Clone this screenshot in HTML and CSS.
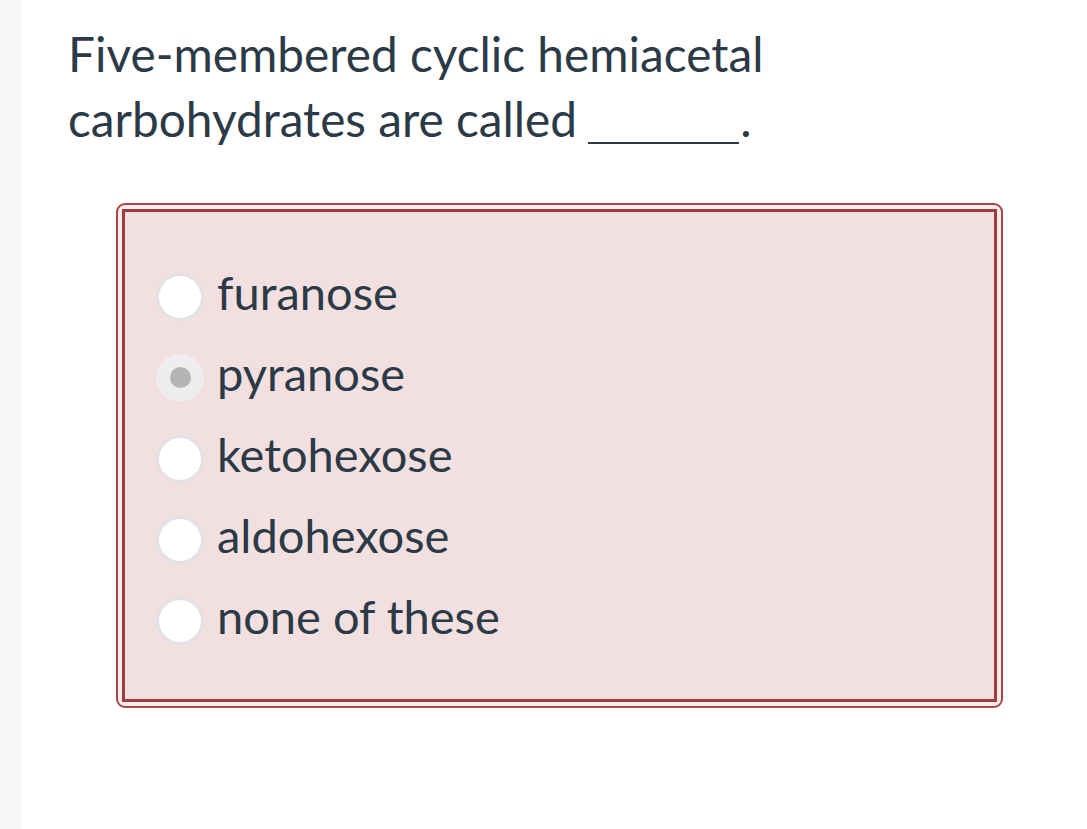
FILE: index.html
```html
<!DOCTYPE html>
<html>
<head>
<meta charset="utf-8">
<link rel="stylesheet" href="styles.css">
</head>
<body>
<div class="page">
  <div class="strip"></div>
  <div class="content">
    <p class="question">Five-membered cyclic hemiacetal carbohydrates are called <span class="blank"></span>.</p>
    <div class="answers-outer">
      <div class="answers">
        <div class="option"><span class="radio"></span><span class="label">furanose</span></div>
        <div class="option"><span class="radio selected"></span><span class="label">pyranose</span></div>
        <div class="option"><span class="radio"></span><span class="label">ketohexose</span></div>
        <div class="option"><span class="radio"></span><span class="label">aldohexose</span></div>
        <div class="option"><span class="radio"></span><span class="label">none of these</span></div>
      </div>
    </div>
  </div>
</div>
</body>
</html>
```

FILE: styles.css
```css
html, body {
  margin: 0;
  padding: 0;
  background: #ffffff;
}
body {
  font-family: Lato, "Noto Sans", sans-serif;
  color: #2b3a46;
}
.page {
  display: flex;
  width: 1087px;
  height: 829px;
  overflow: hidden;
}
.strip {
  width: 22px;
  flex: none;
  background: #f6f6f8;
}
.content {
  flex: 1;
  padding-left: 46px;
  padding-top: 21px;
}
.question {
  margin: 0;
  width: 740px;
  font-size: 47.8px;
  line-height: 65px;
}
.blank {
  display: inline-block;
  width: 151px;
  border-bottom: 2px solid #2b3a46;
  margin-left: -1px;
  margin-right: 1px;
  vertical-align: -7px;
}
.answers-outer {
  margin-top: 52px;
  margin-left: 48px;
  width: 875px;
  border: 2px solid #a94546;
  border-radius: 9px;
  padding: 4px;
  background: #f8eced;
}
.answers {
  border: 3px solid #9e3d40;
  background: #f2dfe0;
  padding: 44px 0 38px 31px;
  display: flex;
  flex-direction: column;
}
.option {
  height: 81px;
  display: flex;
  align-items: center;
  gap: 13px;
}
.radio {
  box-sizing: border-box;
  width: 48px;
  height: 48px;
  border-radius: 50%;
  background: #ffffff;
  border: 3px solid #e2e1e4;
  flex: none;
  display: flex;
  align-items: center;
  justify-content: center;
}
.radio.selected {
  background: #eeedf0;
  border-color: #eeedf0;
}
.radio.selected::after {
  content: "";
  width: 21px;
  height: 21px;
  border-radius: 50%;
  background: #b5b5b8;
}
.label {
  font-size: 47px;
  line-height: 48px;
  padding-bottom: 10px;
}
```
